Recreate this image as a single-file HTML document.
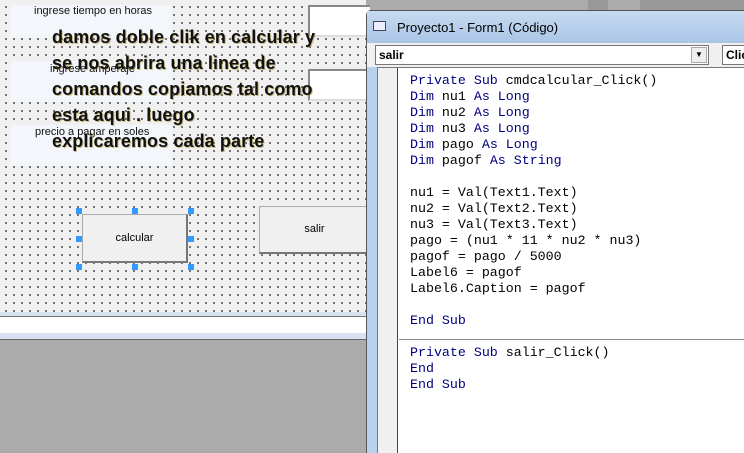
<!DOCTYPE html>
<html><head><meta charset="utf-8"><style>
*{margin:0;padding:0;box-sizing:border-box}
body{width:744px;height:453px;overflow:hidden;position:relative;background:#ababab;font-family:"Liberation Sans",sans-serif}
.form{position:absolute;left:0;top:0;width:366px;height:312px;background-color:#f0f0f0;background-image:radial-gradient(circle,#222 0.7px,transparent 1px);background-size:8px 8px;background-position:2px 3px}
.lbl{position:absolute;background:#f3f6fb;font-size:11px;color:#111}
.tb{position:absolute;background:#fff;border:2px solid #888;border-right:none;border-bottom-color:#ddd}
.btn{position:absolute;background:#f0f0f0;border:1px solid #aaa;border-right:2px solid #777;border-bottom:2px solid #777;font-size:11px;text-align:center}
.h{position:absolute;width:6px;height:6px;background:#3399ff}
.big{position:absolute;left:52px;top:24px;font-weight:bold;font-size:18px;line-height:26px;color:#111;text-shadow:1px 1px 0 rgba(150,120,0,0.45);white-space:nowrap;letter-spacing:0.1px}
.win{position:absolute;left:366px;top:10px;width:378px;height:443px;background:#b9d1ea;border-left:1px solid #555;border-top:1px solid #555;border-top-left-radius:5px}
.title{position:absolute;left:0;top:0;right:0;height:32px;background:linear-gradient(#c7dbf0,#a9c5e6);font-size:13px;color:#000}
.code{position:absolute;left:10px;top:56px;right:0;bottom:0;background:#fff;border-left:1px solid #777;border-top:1px solid #777}
.mg{position:absolute;left:0;top:0;width:20px;bottom:0;background:#f0f0f0;border-right:1px solid #444}
pre{position:absolute;left:32px;font-family:"Liberation Mono",monospace;font-size:13.3px;line-height:16px;color:#000}
.k{color:#00007f}
</style></head><body>
<div class="form">
<div class="lbl" style="left:10px;top:5px;width:162px;height:33px"><span style="position:absolute;left:24px;top:0">ingrese tiempo en horas</span></div>
<div class="lbl" style="left:10px;top:61px;width:162px;height:41px"><span style="position:absolute;left:40px;top:2px">ingrese amperaje</span></div>
<div class="lbl" style="left:10px;top:125px;width:162px;height:41px"><span style="position:absolute;left:25px;top:1px">precio a pagar en soles</span></div>
<div class="tb" style="left:308px;top:5px;width:62px;height:32px"></div>
<div class="tb" style="left:308px;top:69px;width:62px;height:32px"></div>
<div class="btn" style="left:82px;top:214px;width:106px;height:49px;line-height:46px">calcular</div>
<div class="btn" style="left:259px;top:206px;width:110px;height:48px;line-height:44px;border-right:none">salir</div>
<div class="h" style="left:76px;top:208px"></div><div class="h" style="left:132px;top:208px"></div><div class="h" style="left:188px;top:208px"></div>
<div class="h" style="left:76px;top:236px"></div><div class="h" style="left:188px;top:236px"></div>
<div class="h" style="left:76px;top:264px"></div><div class="h" style="left:132px;top:264px"></div><div class="h" style="left:188px;top:264px"></div>
<div class="big">damos doble clik en calcular y<br>se nos abrira una linea de<br>comandos copiamos tal como<br>esta aqui . luego<br>explicaremos cada parte</div>
</div>
<div style="position:absolute;left:0;top:312px;width:366px;height:5px;background:#d6e2ef;border-bottom:1px solid #777"></div>
<div style="position:absolute;left:0;top:317px;width:366px;height:16px;background:#fff"></div>
<div style="position:absolute;left:0;top:333px;width:366px;height:7px;background:#d6e2ef;border-bottom:1px solid #666"></div>
<div style="position:absolute;left:588px;top:0;width:20px;height:10px;background:#999"></div>
<div style="position:absolute;left:640px;top:0;width:104px;height:10px;background:#999"></div>
<div class="win">
<div class="title"><span style="position:absolute;left:6px;top:10px;width:13px;height:10px;border:1px solid #446;background:#eef"></span><span style="position:absolute;left:30px;top:9px">Proyecto1 - Form1 (Código)</span></div>
<div style="position:absolute;left:0;top:32px;right:0;height:24px;background:#f0f0f0"></div>
<div style="position:absolute;left:8px;top:34px;width:334px;height:20px;background:#fff;border:1px solid #777;font-size:12px;font-weight:bold;padding:2px 0 0 3px">salir<span style="position:absolute;right:1px;top:1px;width:16px;height:16px;background:#eee;border:1px solid #aaa;font-size:8px;text-align:center;line-height:14px">▼</span></div>
<div style="position:absolute;left:355px;top:34px;width:30px;height:20px;background:#fff;border:1px solid #777;font-size:12px;font-weight:bold;padding:2px 0 0 3px">Clic</div>
<div class="code"><div class="mg"></div>
<pre style="top:5px"><span class="k">Private Sub</span> cmdcalcular_Click()
<span class="k">Dim</span> nu1 <span class="k">As Long</span>
<span class="k">Dim</span> nu2 <span class="k">As Long</span>
<span class="k">Dim</span> nu3 <span class="k">As Long</span>
<span class="k">Dim</span> pago <span class="k">As Long</span>
<span class="k">Dim</span> pagof <span class="k">As String</span>

nu1 = Val(Text1.Text)
nu2 = Val(Text2.Text)
nu3 = Val(Text3.Text)
pago = (nu1 * 11 * nu2 * nu3)
pagof = pago / 5000
Label6 = pagof
Label6.Caption = pagof

<span class="k">End Sub</span></pre>
<div style="position:absolute;left:21px;right:0;top:271px;height:1px;background:#888"></div>
<pre style="top:277px"><span class="k">Private Sub</span> salir_Click()
<span class="k">End</span>
<span class="k">End Sub</span></pre>
</div>
</div>
</body></html>
